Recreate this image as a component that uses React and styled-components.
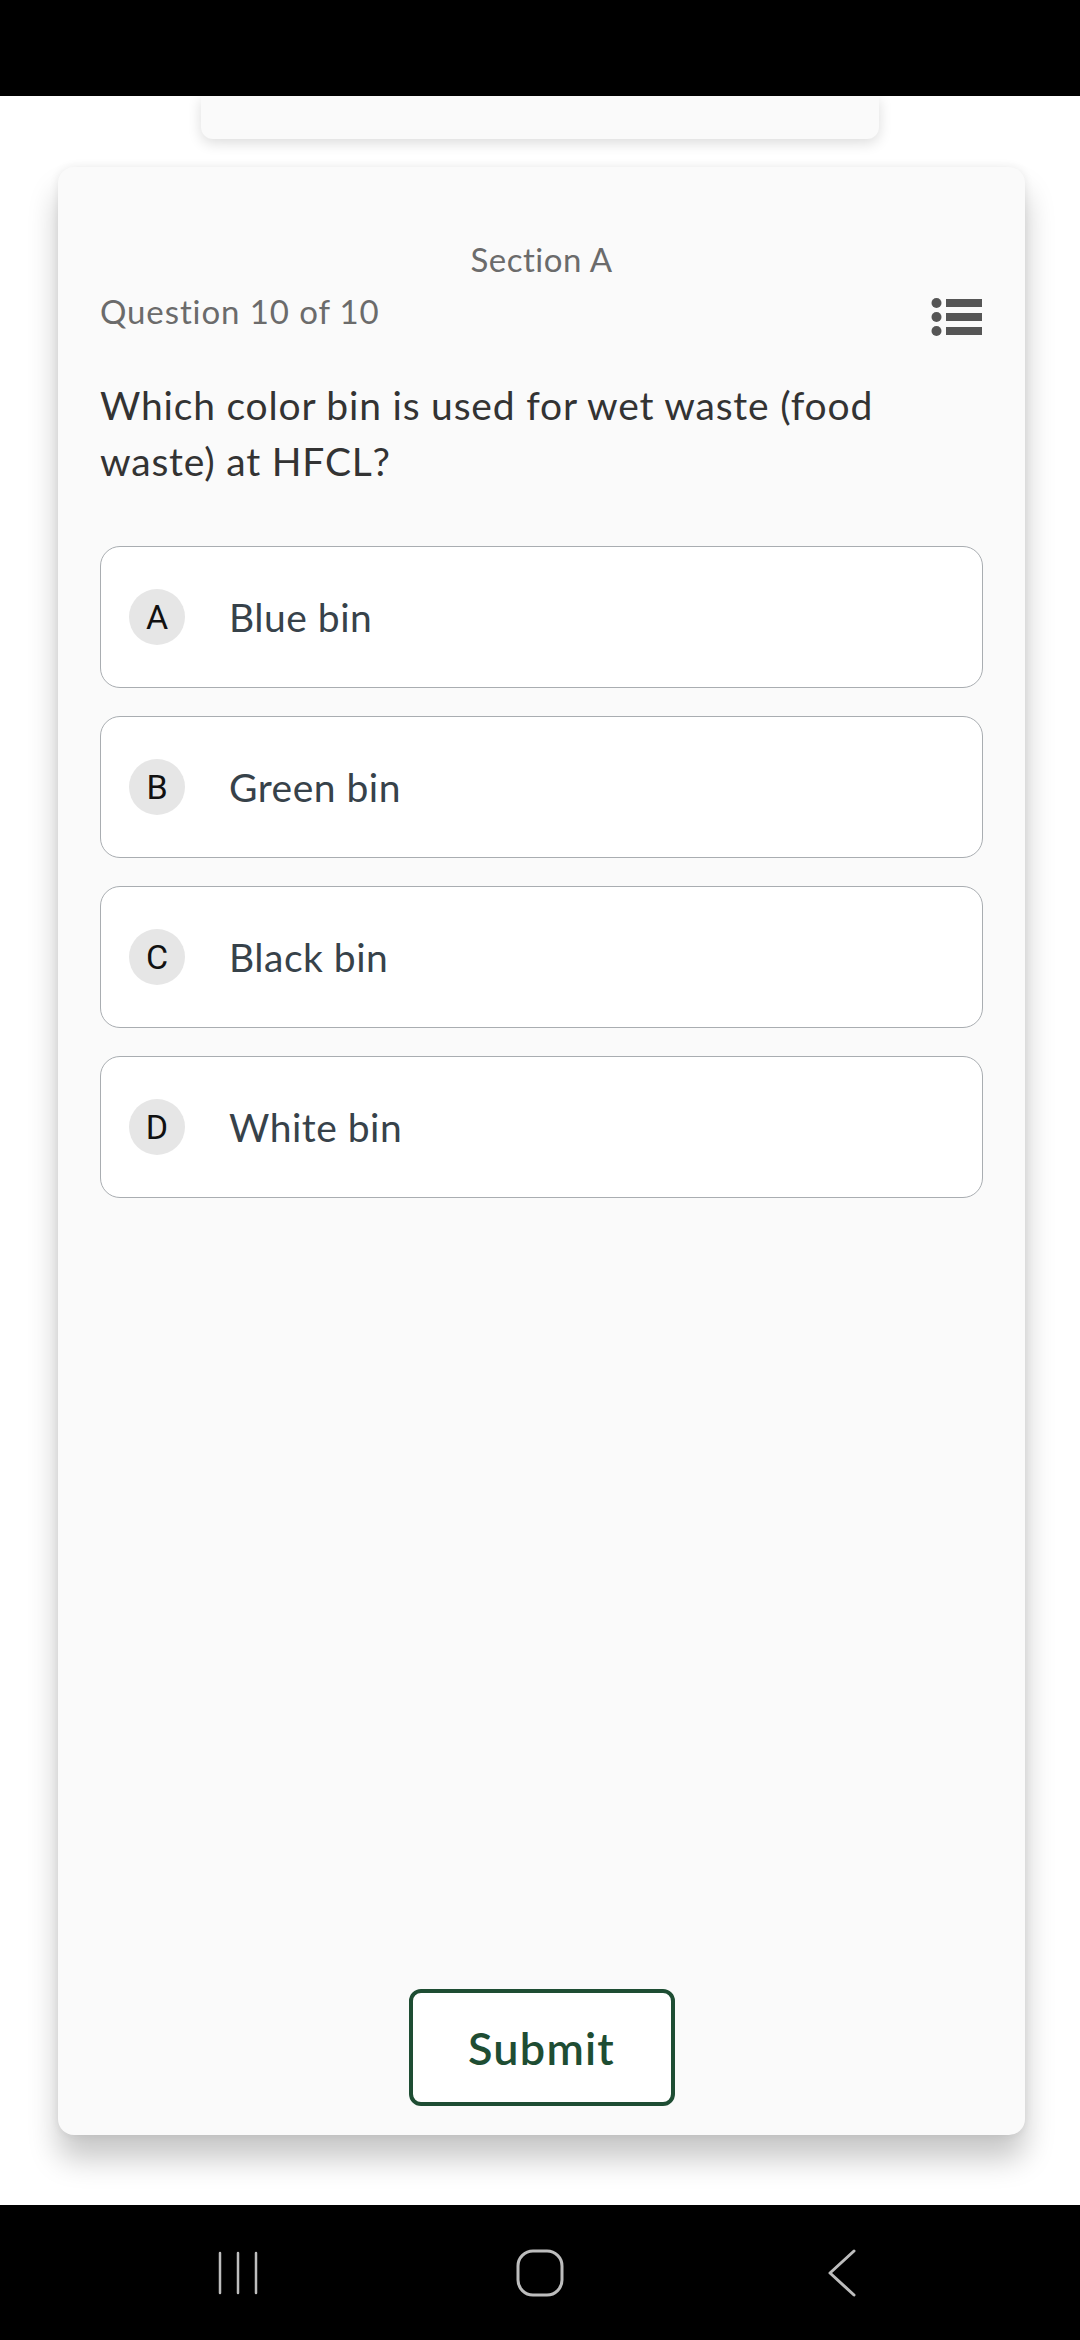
import React, { useState } from 'react'
import styled, { createGlobalStyle, css } from 'styled-components'

const GlobalStyle = createGlobalStyle`
  html, body {
    margin: 0;
    padding: 0;
    background: #fff;
  }
  body {
    font-family: Lato, "Open Sans", sans-serif;
    width: 1080px;
    height: 2340px;
    overflow: hidden;
  }
  * {
    box-sizing: border-box;
  }
`

const Screen = styled.div`
  display: flex;
  flex-direction: column;
  width: 1080px;
  height: 2340px;
  background: #fff;
`

const StatusBar = styled.div`
  height: 96px;
  background: #000;
  flex-shrink: 0;
`

const Content = styled.div`
  flex: 1;
  display: flex;
  flex-direction: column;
  align-items: center;
  overflow: hidden;
`

const PrevCard = styled.div`
  width: 678px;
  height: 43px;
  background: #fafafa;
  border-radius: 0 0 12px 12px;
  box-shadow: 0 4px 14px rgba(0, 0, 0, 0.14);
`

const Card = styled.div`
  width: 967px;
  height: 1968px;
  margin-top: 28px;
  margin-left: 3px;
  background: #fafafa;
  border-radius: 16px;
  box-shadow: 0 24px 30px rgba(0, 0, 0, 0.22), 0 0 10px rgba(0, 0, 0, 0.08);
  padding: 0 42px 29px;
  display: flex;
  flex-direction: column;
`

const SectionTitle = styled.div`
  margin-top: 72px;
  text-align: center;
  font-size: 33px;
  letter-spacing: 0.5px;
  line-height: 40px;
  color: #6b6b6b;
`

const CounterRow = styled.div`
  display: flex;
  justify-content: space-between;
  align-items: center;
  margin-top: 6px;
`

const Counter = styled.div`
  font-size: 33px;
  letter-spacing: 0.9px;
  line-height: 40px;
  color: #6b6b6b;
`

const ListButton = styled.button`
  border: none;
  background: none;
  padding: 0;
  margin-top: 12px;
  width: 52px;
  height: 40px;
  cursor: pointer;
  display: flex;
  align-items: center;
`

const QuestionText = styled.div`
  margin-top: 40px;
  font-size: 39px;
  letter-spacing: 0.8px;
  line-height: 56px;
  color: #333;
  padding-right: 60px;
`

const Options = styled.div`
  display: flex;
  flex-direction: column;
  gap: 28px;
  margin-top: 57px;
`

const OptionRow = styled.button`
  display: flex;
  align-items: center;
  height: 142px;
  width: 100%;
  padding: 0 0 0 28px;
  background: #fff;
  border: 1.5px solid #a9adb1;
  border-radius: 20px;
  cursor: pointer;
  text-align: left;
  font-family: inherit;
  ${(p) =>
    p.selected &&
    css`
      border-color: #1e4d33;
      background: #f2f8f4;
    `}
`

const Letter = styled.span`
  width: 56px;
  height: 56px;
  border-radius: 50%;
  background: #e6e6e6;
  display: flex;
  align-items: center;
  justify-content: center;
  font-family: Roboto, "Liberation Sans", sans-serif;
  font-size: 34px;
  color: #111;
  flex-shrink: 0;
`

const OptionLabel = styled.span`
  margin-left: 44px;
  font-size: 39px;
  letter-spacing: 0.5px;
  color: #37424a;
`

const Footer = styled.div`
  margin-top: auto;
  display: flex;
  justify-content: center;
`

const SubmitButton = styled.button`
  width: 266px;
  height: 117px;
  border: 4px solid #1e4d33;
  border-radius: 12px;
  background: #fff;
  color: #1e4d33;
  font-family: inherit;
  font-size: 45px;
  font-weight: 600;
  letter-spacing: 1.2px;
  cursor: pointer;
`

const NavBar = styled.div`
  height: 135px;
  background: #000;
  flex-shrink: 0;
  display: flex;
  justify-content: center;
  align-items: center;
`

const NavSlot = styled.div`
  width: 302px;
  display: flex;
  justify-content: center;
  align-items: center;
`

const ListIcon = () => (
  <svg width="52" height="40" viewBox="0 0 52 40">
    <g fill="#555">
      <circle cx="5.5" cy="6" r="5" />
      <circle cx="5.5" cy="20" r="5" />
      <circle cx="5.5" cy="34" r="5" />
      <rect x="15" y="2" width="36" height="8" />
      <rect x="15" y="16" width="36" height="8" />
      <rect x="15" y="30" width="36" height="8" />
    </g>
  </svg>
)

const options = [
  { key: 'A', label: 'Blue bin' },
  { key: 'B', label: 'Green bin' },
  { key: 'C', label: 'Black bin' },
  { key: 'D', label: 'White bin' },
]

export default function App() {
  const [selected, setSelected] = useState(null)

  return (
    <Screen>
      <GlobalStyle />
      <StatusBar />
      <Content>
        <PrevCard />
        <Card>
          <SectionTitle>Section A</SectionTitle>
          <CounterRow>
            <Counter>Question 10 of 10</Counter>
            <ListButton>
              <ListIcon />
            </ListButton>
          </CounterRow>
          <QuestionText>
            Which color bin is used for wet waste (food waste) at HFCL?
          </QuestionText>
          <Options>
            {options.map((o) => (
              <OptionRow
                key={o.key}
                selected={selected === o.key}
                onClick={() => setSelected(o.key)}
              >
                <Letter>{o.key}</Letter>
                <OptionLabel>{o.label}</OptionLabel>
              </OptionRow>
            ))}
          </Options>
          <Footer>
            <SubmitButton>Submit</SubmitButton>
          </Footer>
        </Card>
      </Content>
      <NavBar>
        <NavSlot>
          <svg width="44" height="46" viewBox="0 0 44 46">
            <g stroke="#bdbdbd" strokeWidth="2.5" strokeLinecap="round">
              <line x1="4" y1="3" x2="4" y2="43" />
              <line x1="22" y1="3" x2="22" y2="43" />
              <line x1="40" y1="3" x2="40" y2="43" />
            </g>
          </svg>
        </NavSlot>
        <NavSlot>
          <svg width="48" height="48" viewBox="0 0 48 48">
            <rect x="2" y="2" width="44" height="44" rx="15" fill="none" stroke="#bdbdbd" strokeWidth="3" />
          </svg>
        </NavSlot>
        <NavSlot>
          <svg width="30" height="48" viewBox="0 0 30 48">
            <polyline points="27,2 3,24 27,46" fill="none" stroke="#bdbdbd" strokeWidth="3" strokeLinecap="round" strokeLinejoin="round" />
          </svg>
        </NavSlot>
      </NavBar>
    </Screen>
  )
}
